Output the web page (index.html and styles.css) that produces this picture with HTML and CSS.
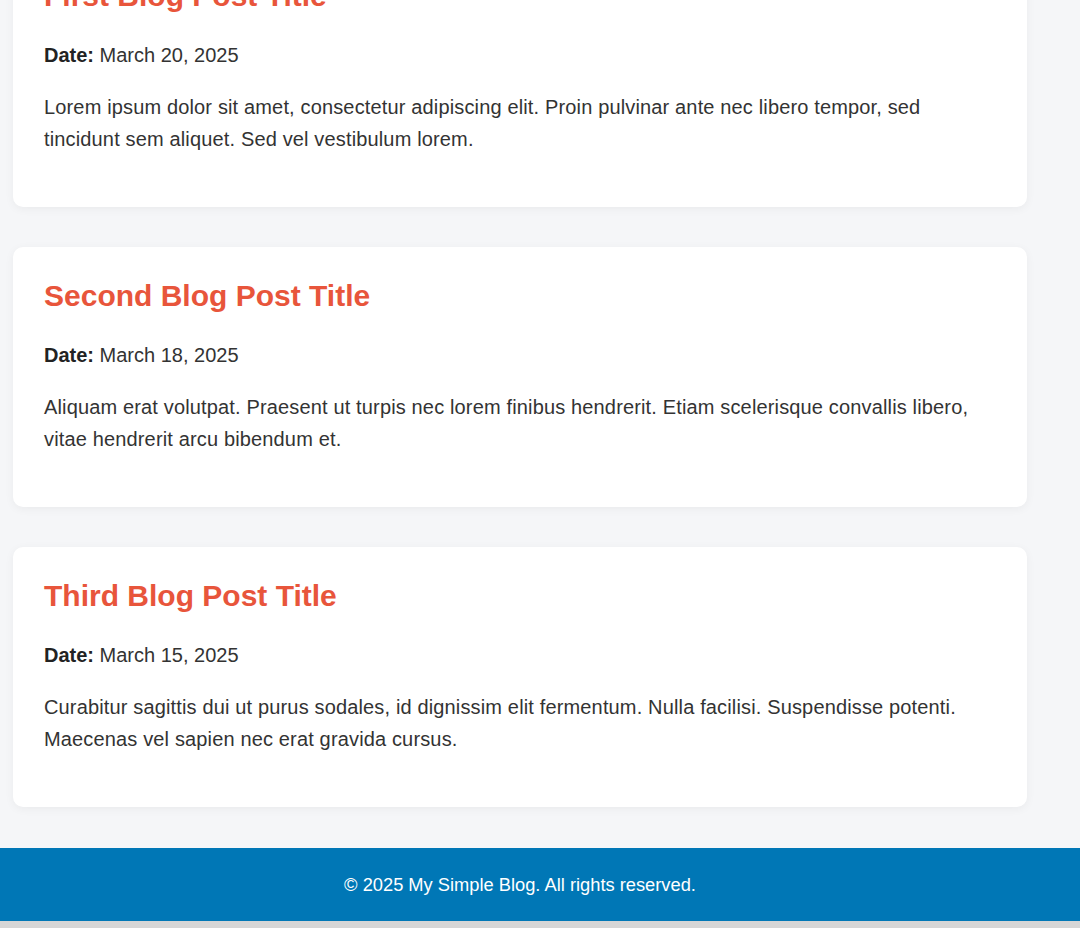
FILE: index.html
```html
<!DOCTYPE html>
<html lang="en">
<head>
  <meta charset="UTF-8">
  <title>My Simple Blog</title>
  <link rel="stylesheet" href="styles.css">
</head>
<body>

<header id="site-header">
  <h1>My Simple Blog</h1>
  <p>Thoughts, notes and stories.</p>
</header>

<nav id="site-nav">
  <a href="#">Home</a>
  <a href="#">About</a>
  <a href="#">Contact</a>
</nav>

<main id="posts">
  <article class="post">
    <h2>First Blog Post Title</h2>
    <p><strong>Date:</strong> March 20, 2025</p>
    <p>Lorem ipsum dolor sit amet, consectetur adipiscing elit. Proin pulvinar ante nec libero tempor, sed tincidunt sem aliquet. Sed vel vestibulum lorem.</p>
  </article>

  <article class="post">
    <h2>Second Blog Post Title</h2>
    <p><strong>Date:</strong> March 18, 2025</p>
    <p>Aliquam erat volutpat. Praesent ut turpis nec lorem finibus hendrerit. Etiam scelerisque convallis libero, vitae hendrerit arcu bibendum et.</p>
  </article>

  <article class="post">
    <h2>Third Blog Post Title</h2>
    <p><strong>Date:</strong> March 15, 2025</p>
    <p>Curabitur sagittis dui ut purus sodales, id dignissim elit fermentum. Nulla facilisi. Suspendisse potenti. Maecenas vel sapien nec erat gravida cursus.</p>
  </article>
</main>

<footer id="site-footer">
  <p>&copy; 2025 My Simple Blog. All rights reserved.</p>
</footer>

<script>
  window.scrollTo(0, document.body.scrollHeight);
</script>
</body>
</html>
```

FILE: styles.css
```css
html { background: #d6d6d6; }
body {
  margin: 0 0 7px;
  font-family: "Liberation Sans", Arial, sans-serif;
  font-size: 20px;
  line-height: 1.6;
  color: #333;
  background: #f5f6f8;
}
#site-header {
  background: #0077b6;
  color: white;
  text-align: center;
  padding: 60px 20px;
}
#site-header h1 { margin: 0 0 10px; font-size: 40px; }
#site-header p { margin: 0; }
#site-nav {
  display: flex;
  justify-content: center;
  gap: 30px;
  padding: 18px;
  background: #005f91;
}
#site-nav a { color: white; text-decoration: none; font-weight: bold; }
#posts {
  display: flex;
  flex-direction: column;
  gap: 40px;
  padding: 90px 53px 41px 13px;
}
.post {
  background: white;
  border-radius: 10px;
  padding: 32px 31px;
  box-shadow: 0 2px 10px rgba(0,0,0,0.05);
}
.post h2 {
  margin: 0 0 26px;
  font-size: 30px;
  line-height: normal;
  color: #e8553b;
}
.post p { margin: 20px 0; letter-spacing: 0.15px; }
.post h2 + p { margin-top: 0; letter-spacing: 0; }
.post strong { color: #222; }
#site-footer {
  background: #0077b6;
  color: white;
  text-align: center;
  font-size: 18.3px;
  padding: 22px 40px 22px 0;
}
#site-footer p { margin: 0; }
```
